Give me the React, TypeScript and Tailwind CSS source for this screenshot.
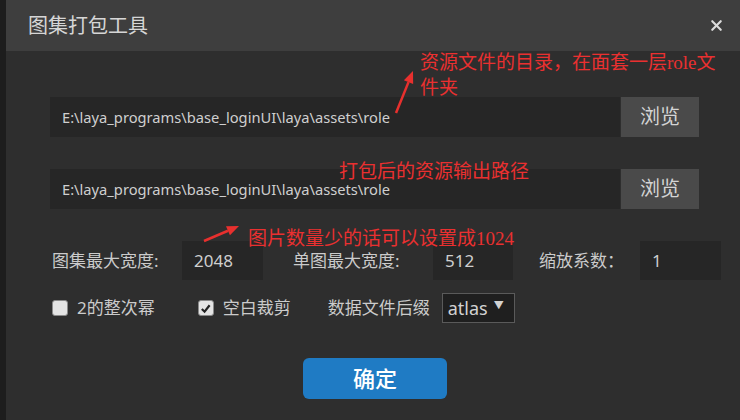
import { X } from "lucide-react";

const ui = { fontFamily: '"Noto Sans", "Noto Sans CJK SC", sans-serif' };
const note = { fontFamily: '"Liberation Serif", "Noto Sans CJK SC", serif' };

const PathRow = ({ value }: { value: string }) => (
  <div className="flex h-[40px]">
    <div className="w-[570px] bg-[#262626] flex items-center pl-[12px] text-[14.7px] text-[#cfcfcf]">
      {value}
    </div>
    <button className="ml-[1px] w-[78px] bg-[#4a4a4a] text-[20px] text-[#d4d4d4] flex items-center justify-center">
      浏览
    </button>
  </div>
);

const NumBox = ({ value, w }: { value: string; w: string }) => (
  <div className={`${w} h-[39px] bg-[#262626] flex items-center pl-[12px] text-[17px] text-[#cfcfcf]`}>
    {value}
  </div>
);

const Check = ({ checked }: { checked?: boolean }) => (
  <span className="w-[16px] h-[16px] rounded-[3px] bg-[#e4e4e4] border border-[#8a8a8a] flex items-center justify-center">
    {checked && (
      <svg width="11" height="11" viewBox="0 0 12 12">
        <path d="M2 6.5 L5 9.5 L10.5 2.5" stroke="#222" strokeWidth="2.4" fill="none" />
      </svg>
    )}
  </span>
);

const Arrow = ({ x1, y1, x2, y2 }: { x1: number; y1: number; x2: number; y2: number }) => {
  const a = Math.atan2(y2 - y1, x2 - x1);
  const l = 12, w = 5;
  const bx = x2 - l * Math.cos(a), by = y2 - l * Math.sin(a);
  const p1 = `${bx + w * Math.sin(a)},${by - w * Math.cos(a)}`;
  const p2 = `${bx - w * Math.sin(a)},${by + w * Math.cos(a)}`;
  return (
    <>
      <line x1={x1} y1={y1} x2={bx} y2={by} stroke="#e8302e" strokeWidth="2.5" />
      <polygon points={`${x2},${y2} ${p1} ${p2}`} fill="#e8302e" />
    </>
  );
};

export default function App() {
  return (
    <div className="relative w-[740px] h-[420px] flex bg-[#2e2e2e] overflow-hidden" style={ui}>
      <div className="w-[6px] bg-[#1d1d1d]" />
      <div className="flex-1 flex flex-col">
        <div className="h-[51px] bg-[#3e3e3e] flex items-center justify-between pl-[22px] pr-[15px]">
          <span className="text-[20px] text-[#d6d6d6]">图集打包工具</span>
          <X className="size-[17px] text-[#dcdcdc]" strokeWidth={3} />
        </div>

        <div className="flex flex-col pl-[44px]">
          <div className="mt-[46px]">
            <PathRow value="E:\laya_programs\base_loginUI\laya\assets\role" />
          </div>
          <div className="mt-[32px]">
            <PathRow value="E:\laya_programs\base_loginUI\laya\assets\role" />
          </div>

          <div className="mt-[32px] flex items-center text-[17px] text-[#cbcbcb]">
            <span className="w-[132px] pl-[2px]">图集最大宽度:</span>
            <NumBox value="2048" w="w-[81px]" />
            <span className="ml-[30px] w-[140px]">单图最大宽度:</span>
            <NumBox value="512" w="w-[80px]" />
            <span className="ml-[26px] w-[101px]">缩放系数：</span>
            <NumBox value="1" w="w-[81px]" />
          </div>

          <div className="mt-[13px] flex items-center text-[17px] text-[#cbcbcb] h-[30px]">
            <span className="ml-[2px]"><Check /></span>
            <span className="ml-[9px]">2的整次幂</span>
            <span className="ml-[43px]"><Check checked /></span>
            <span className="ml-[9px]">空白裁剪</span>
            <span className="ml-[37px]">数据文件后缀</span>
            <div className="ml-[12px] w-[73px] h-[30px] bg-[#1f1f1f] border border-[#5a5a5a] flex items-center pl-[5px] text-[18px] text-[#d2d2d2]">
              atlas
              <span className="ml-[6px] text-[10px] -mt-[6px]">▼</span>
            </div>
          </div>

          <div className="mt-[35px] flex">
            <button className="ml-[253px] w-[144px] h-[41px] rounded-[6px] bg-[#1f7bc4] text-white text-[22px] font-medium">
              确定
            </button>
          </div>
        </div>
      </div>

      <div className="absolute left-[420px] top-[50px] w-[310px] text-[19px] leading-[25px] text-[#ea3030]" style={note}>
        资源文件的目录，在面套一层role文件夹
      </div>
      <div className="absolute left-[339px] top-[158px] text-[19px] text-[#ea3030]" style={note}>
        打包后的资源输出路径
      </div>
      <div className="absolute left-[248px] top-[225px] text-[19px] text-[#ea3030]" style={note}>
        图片数量少的话可以设置成1024
      </div>
      <svg className="absolute left-0 top-0 pointer-events-none" width="740" height="420">
        <Arrow x1={396} y1={113} x2={413} y2={71} />
        <Arrow x1={204} y1={241} x2={239} y2={226} />
      </svg>
    </div>
  );
}
